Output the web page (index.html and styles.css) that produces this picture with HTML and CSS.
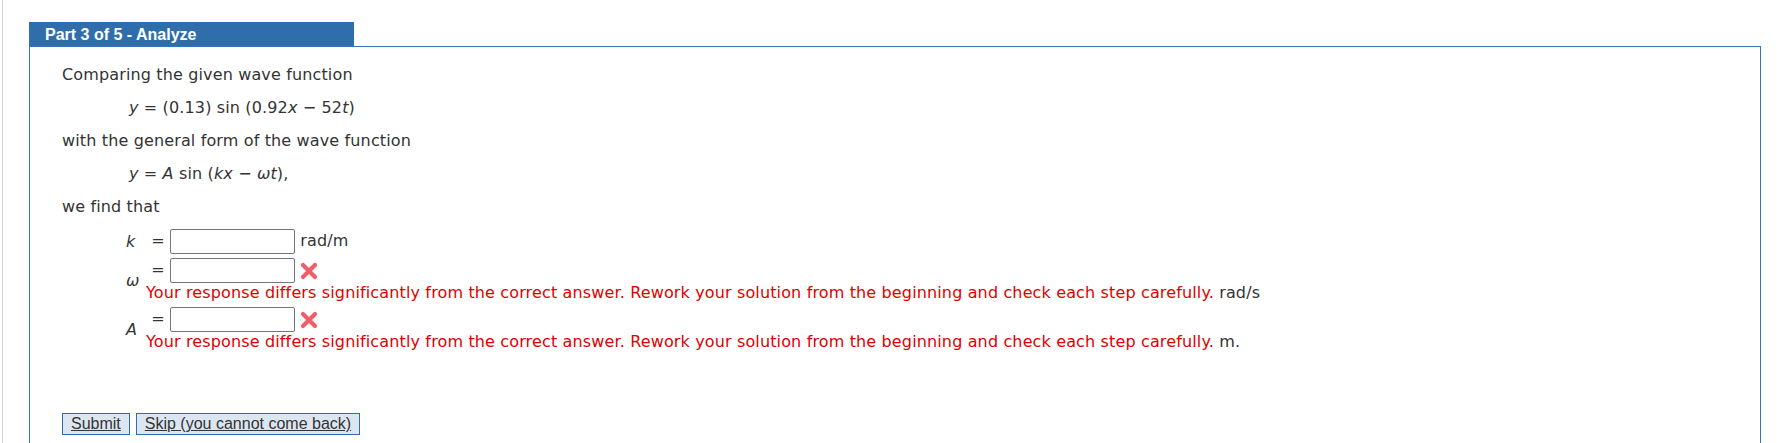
FILE: index.html
```html
<!DOCTYPE html>
<html>
<head>
<meta charset="utf-8">
<link rel="stylesheet" href="styles.css">
</head>
<body>
<div class="page">
  <div class="tab">Part 3 of 5 - Analyze</div>
  <div class="box">
    <div class="lines">
      <p class="line">Comparing the given wave function</p>
      <p class="line eq"><i>y</i> = (0.13) sin (0.92<i>x</i> &minus; 52<i>t</i>)</p>
      <p class="line">with the general form of the wave function</p>
      <p class="line eq"><i>y</i> = <i>A</i> sin (<i>kx</i> &minus; <i>&omega;t</i>),</p>
      <p class="line">we find that</p>
    </div>
    <table class="answers">
      <tr>
        <td class="lbl"><i>k</i></td>
        <td class="val">&nbsp;= <span class="inp"></span> rad/m</td>
      </tr>
      <tr>
        <td class="lbl"><i>&omega;</i></td>
        <td class="val">&nbsp;= <span class="inp"></span> <svg class="xmark" viewBox="0 0 18 18" width="18" height="18"><path d="M3 3 L15 15 M15 3 L3 15" stroke="#f25c66" stroke-width="4.2" stroke-linecap="round"/></svg><br><span class="err">Your response differs significantly from the correct answer. Rework your solution from the beginning and check each step carefully.</span> rad/s</td>
      </tr>
      <tr>
        <td class="lbl"><i>A</i></td>
        <td class="val">&nbsp;= <span class="inp"></span> <svg class="xmark" viewBox="0 0 18 18" width="18" height="18"><path d="M3 3 L15 15 M15 3 L3 15" stroke="#f25c66" stroke-width="4.2" stroke-linecap="round"/></svg><br><span class="err">Your response differs significantly from the correct answer. Rework your solution from the beginning and check each step carefully.</span> m.</td>
      </tr>
    </table>
    <div class="buttons">
      <button class="btn">Submit</button>
      <button class="btn">Skip (you cannot come back)</button>
    </div>
  </div>
</div>
</body>
</html>
```

FILE: styles.css
```css
html, body {
  margin: 0;
  padding: 0;
  background: #fff;
}
body {
  padding-left: 2px;
  font-family: "DejaVu Sans", Verdana, sans-serif;
  color: #333;
  overflow: hidden;
}
.page {
  border-left: 1px solid #d4d4d4;
  padding-left: 26px;
  padding-top: 22px;
  min-height: 460px;
}
.tab {
  width: 309px;
  height: 24px;
  line-height: 25px;
  padding-left: 16px;
  background: #2f6eaa;
  color: #fff;
  font-family: "Liberation Sans", Arial, sans-serif;
  font-weight: bold;
  font-size: 16px;
}
.box {
  width: 1732px;
  border: 1px solid #3574b8;
  min-height: 420px;
  padding: 18px 0 0 32px;
  box-sizing: border-box;
}
.lines {
  display: flex;
  flex-direction: column;
  gap: 13px;
}
.line {
  margin: 0;
  font-size: 16px;
  line-height: 20px;
  letter-spacing: 0.14px;
}
.eq {
  padding-left: 67px;
}
.answers {
  border-collapse: separate;
  border-spacing: 0 4px;
  margin: 8px 0 0 64px;
  font-size: 16px;
  letter-spacing: 0.14px;
}
.answers td {
  padding: 0;
  vertical-align: middle;
  line-height: 20px;
}
.lbl {
  width: 20px;
  padding-left: 0;
}
.val {
  white-space: nowrap;
}
.inp {
  display: inline-block;
  width: 123px;
  height: 23px;
  border: 1px solid #767676;
  border-radius: 2px;
  vertical-align: middle;
  background: #fff;
}
.xmark {
  vertical-align: middle;
}
.err {
  color: #e00000;
}
.buttons {
  display: flex;
  gap: 6px;
  margin-top: 57px;
}
.btn {
  font-family: "Liberation Sans", Arial, sans-serif;
  font-size: 16px;
  color: #333;
  text-decoration: underline;
  background: #dbe6f1;
  border: 1px solid #2f6eaa;
  border-radius: 0;
  height: 22px;
  padding: 0 8px;
  line-height: 20px;
}
```
